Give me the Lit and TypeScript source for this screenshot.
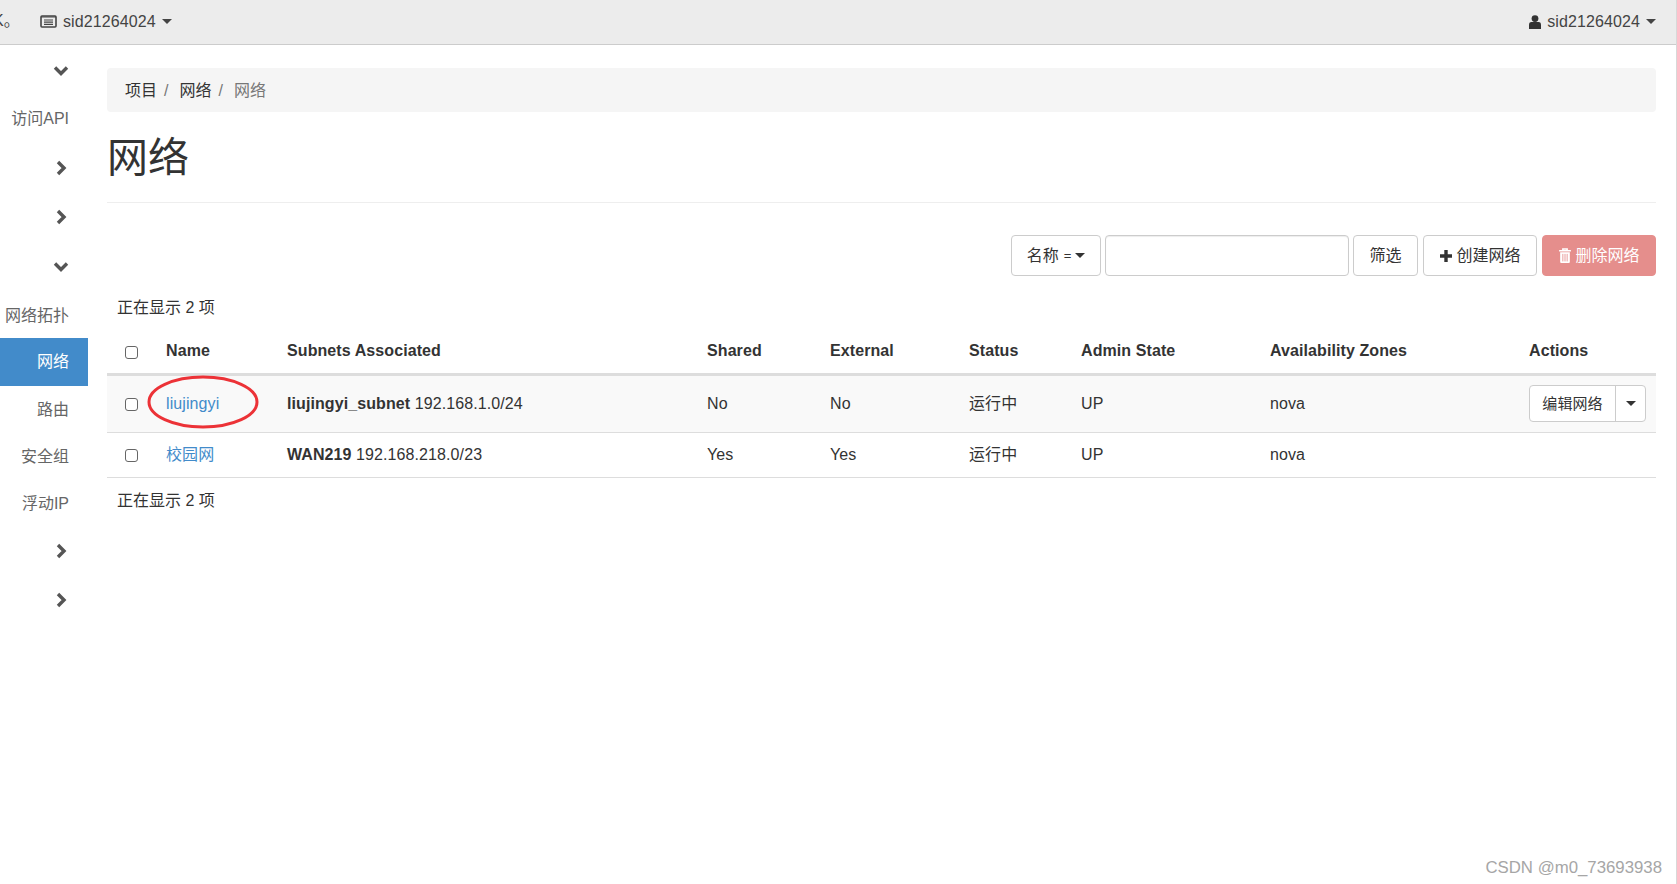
import { LitElement, css, html, svg } from "lit";
import { customElement } from "lit/decorators.js";

const chevronDown = svg`<path d="M2 5.5 8 11.5 14 5.5" fill="none" stroke="currentColor" stroke-width="3.4"/>`;
const chevronRight = svg`<path d="M5 2 11 8 5 14" fill="none" stroke="currentColor" stroke-width="3.4"/>`;

const columns = ["Name", "Subnets Associated", "Shared", "External", "Status", "Admin State", "Availability Zones", "Actions"];

@customElement("app-root")
export class AppRoot extends LitElement {
  static styles = css`
    :host {
      display: block;
      position: relative;
      height: 884px;
      overflow: hidden;
      background: #fff;
      color: #333;
      font-family: "Liberation Sans", "Noto Sans CJK SC", sans-serif;
      font-size: 16px;
      line-height: 22px;
    }
    * {
      box-sizing: border-box;
    }
    .navbar {
      display: flex;
      align-items: center;
      height: 45px;
      padding: 0 20px 1px 40px;
      margin-right: 1px;
      background: #ececec;
      border-bottom: 1px solid #ccc;
      color: #444;
      letter-spacing: 0.1px;
    }
    .logo-bit {
      position: absolute;
      left: -7px;
      top: 10px;
      font-size: 16px;
      color: #444;
    }
    .nav-item {
      display: flex;
      align-items: center;
    }
    .nav-item .icon {
      margin-right: 6px;
    }
    .spacer {
      flex: 1;
    }
    .caret {
      display: inline-block;
      width: 0;
      height: 0;
      margin-left: 6px;
      border-top: 5px solid currentColor;
      border-left: 5px solid transparent;
      border-right: 5px solid transparent;
    }
    .layout {
      display: flex;
      align-items: flex-start;
    }
    .sidebar {
      flex: none;
      width: 88px;
      color: #666;
    }
    .row {
      display: flex;
      align-items: center;
      justify-content: flex-end;
      padding-right: 19px;
    }
    .row.top {
      height: 49px;
      color: #555;
    }
    .row.top svg {
      display: block;
      width: 16px;
      height: 16px;
    }
    .group {
      margin: 2px 0 -1px;
    }
    .row.sub {
      height: 47px;
    }
    .row.sub.first {
      height: 46px;
      padding-top: 1px;
    }
    .row.sub.api {
      height: 49px;
    }
    .row.active {
      height: 48px;
      background: #428bca;
      color: #fff;
    }
    .content {
      flex: 1;
      min-width: 0;
      padding: 23px 21px 0 19px;
    }
    .breadcrumb {
      display: flex;
      align-items: center;
      height: 44px;
      padding: 2px 18px 0;
      background: #f5f5f5;
      border-radius: 4px;
    }
    .breadcrumb .sep {
      padding: 0 11px 0 7px;
      color: #777;
    }
    .breadcrumb .current {
      color: #777;
    }
    h1 {
      margin: 0;
      height: 91px;
      padding-top: 19px;
      border-bottom: 1px solid #eee;
      font-size: 41px;
      font-weight: 400;
      line-height: 54px;
    }
    .toolbar {
      display: flex;
      justify-content: flex-end;
      gap: 4px;
      margin-top: 32px;
    }
    .btn {
      display: flex;
      align-items: center;
      justify-content: center;
      height: 41px;
      padding: 0;
      background: #fff;
      border: 1px solid #ccc;
      border-radius: 4px;
      color: #333;
      font: inherit;
    }
    .btn svg {
      margin-right: 3px;
    }
    .btn.filter-name {
      width: 90px;
    }
    .btn.filter-name .eq {
      margin-left: 5px;
      font-size: 13px;
    }
    .btn.filter-name .caret {
      margin-left: 4px;
    }
    .filter-input {
      width: 244px;
      height: 41px;
      border: 1px solid #ccc;
      border-radius: 4px;
      box-shadow: inset 0 1px 1px rgba(0, 0, 0, 0.075);
    }
    .btn.filter {
      width: 65px;
    }
    .btn.create {
      width: 114px;
      margin-left: 1px;
    }
    .btn.delete {
      width: 114px;
      margin-left: 1px;
      background: #e58e8c;
      border-color: #e58e8c;
      color: #fff;
    }
    .count {
      height: 22px;
      padding-left: 10px;
    }
    .count.top {
      margin-top: 21px;
    }
    .count.bottom {
      margin-top: 12px;
    }
    table {
      width: 100%;
      margin-top: 10px;
      border-collapse: collapse;
      table-layout: fixed;
      letter-spacing: 0.09px;
    }
    th,
    td {
      padding: 0 0 0 8px;
      text-align: left;
      vertical-align: middle;
    }
    th {
      height: 45px;
      padding-top: 1px;
      border-bottom: 3px solid #ddd;
      font-weight: 700;
    }
    td {
      border-bottom: 1px solid #ddd;
    }
    tr.odd td {
      height: 58px;
      background: #f9f9f9;
    }
    tr.even td {
      height: 45px;
    }
    .check {
      display: block;
      width: 13px;
      height: 13px;
      margin: 2px 0 0 10px;
      border: 1.5px solid #666;
      border-radius: 3px;
      background: #fff;
    }
    .name-cell {
      position: relative;
    }
    a {
      color: #428bca;
      text-decoration: none;
    }
    .ring {
      position: absolute;
      left: -11px;
      top: -1px;
      width: 112px;
      height: 54px;
      pointer-events: none;
    }
    .actions {
      display: flex;
      width: 117px;
      height: 37px;
      background: #fff;
      border: 1px solid #ccc;
      border-radius: 4px;
      font-size: 15px;
    }
    .actions .main {
      display: flex;
      align-items: center;
      justify-content: center;
      width: 86px;
      border-right: 1px solid #ccc;
    }
    .actions .more {
      display: flex;
      flex: 1;
      align-items: center;
      justify-content: center;
    }
    .actions .caret {
      margin: 0;
    }
    .edge {
      position: absolute;
      top: 0;
      right: 0;
      bottom: 0;
      width: 1px;
      background: #d8d8d8;
    }
    .watermark {
      position: absolute;
      right: 15px;
      bottom: 5px;
      color: #a6a6a6;
      font-size: 16.8px;
    }
  `;

  private sideTop(icon: unknown) {
    return html`<div class="row top"><svg viewBox="0 0 16 16">${icon}</svg></div>`;
  }

  render() {
    return html`
      <div class="navbar">
        <span class="logo-bit">K。</span>
        <div class="nav-item">
          <svg class="icon" width="17" height="13" viewBox="0 0 17 13">
            <rect x="1" y="1" width="15" height="11" rx="1" fill="none" stroke="#444" stroke-width="1.6" />
            <path d="M1 2h15M4 5h9M4 7.2h9M4 9.4h9" stroke="#444" stroke-width="1.2" />
          </svg>
          sid21264024<span class="caret"></span>
        </div>
        <div class="spacer"></div>
        <div class="nav-item">
          <svg class="icon" width="12" height="14" viewBox="0 0 12 14">
            <circle cx="6" cy="3.6" r="3.4" fill="#333" />
            <path d="M0 14V9.5C0 7.8 1.2 7 2.4 7h7.2C10.8 7 12 7.8 12 9.5V14z" fill="#333" />
          </svg>
          sid21264024<span class="caret"></span>
        </div>
      </div>
      <div class="layout">
        <nav class="sidebar">
          ${this.sideTop(chevronDown)}
          <div class="row sub api">访问API</div>
          ${this.sideTop(chevronRight)} ${this.sideTop(chevronRight)} ${this.sideTop(chevronDown)}
          <div class="group">
            <div class="row sub first">网络拓扑</div>
            <div class="row active">网络</div>
            <div class="row sub">路由</div>
            <div class="row sub">安全组</div>
            <div class="row sub">浮动IP</div>
          </div>
          ${this.sideTop(chevronRight)} ${this.sideTop(chevronRight)}
        </nav>
        <main class="content">
          <div class="breadcrumb">
            <span>项目</span><span class="sep">/</span><span>网络</span><span class="sep">/</span>
            <span class="current">网络</span>
          </div>
          <h1>网络</h1>
          <div class="toolbar">
            <button class="btn filter-name">名称<span class="eq">=</span><span class="caret"></span></button>
            <input class="filter-input" />
            <button class="btn filter">筛选</button>
            <button class="btn create">
              <svg width="14" height="14" viewBox="0 0 14 14"><path d="M7 1v12M1 7h12" stroke="#333" stroke-width="3.4" /></svg>
              创建网络
            </button>
            <button class="btn delete">
              <svg width="14" height="15" viewBox="0 0 13 14">
                <path d="M1 2.5h11M4.5 2.5V1h4v1.5" fill="none" stroke="#fff" stroke-width="1.4" />
                <path d="M2 4h9v9a1 1 0 0 1-1 1H3a1 1 0 0 1-1-1z" fill="#fff" />
                <path d="M4.5 5.5v7M6.5 5.5v7M8.5 5.5v7" stroke="#e58e8c" stroke-width="0.8" />
              </svg>
              删除网络
            </button>
          </div>
          <div class="count top">正在显示 2 项</div>
          <table>
            <colgroup>
              <col style="width:51px" />
              <col style="width:121px" />
              <col style="width:420px" />
              <col style="width:123px" />
              <col style="width:139px" />
              <col style="width:112px" />
              <col style="width:189px" />
              <col style="width:259px" />
              <col style="width:135px" />
            </colgroup>
            <thead>
              <tr>
                <th><span class="check"></span></th>
                ${columns.map((c) => html`<th>${c}</th>`)}
              </tr>
            </thead>
            <tbody>
              <tr class="odd">
                <td><span class="check"></span></td>
                <td class="name-cell">
                  <a href="#">liujingyi</a>
                  <svg class="ring" viewBox="0 0 112 54">
                    <ellipse cx="56" cy="27" rx="54" ry="25" fill="none" stroke="#ec3237" stroke-width="3" />
                  </svg>
                </td>
                <td><b>liujingyi_subnet</b> 192.168.1.0/24</td>
                <td>No</td>
                <td>No</td>
                <td>运行中</td>
                <td>UP</td>
                <td>nova</td>
                <td>
                  <div class="actions">
                    <span class="main">编辑网络</span>
                    <span class="more"><span class="caret"></span></span>
                  </div>
                </td>
              </tr>
              <tr class="even">
                <td><span class="check"></span></td>
                <td><a href="#">校园网</a></td>
                <td><b>WAN219</b> 192.168.218.0/23</td>
                <td>Yes</td>
                <td>Yes</td>
                <td>运行中</td>
                <td>UP</td>
                <td>nova</td>
                <td></td>
              </tr>
            </tbody>
          </table>
          <div class="count bottom">正在显示 2 项</div>
        </main>
      </div>
      <div class="edge"></div>
      <div class="watermark">CSDN @m0_73693938</div>
    `;
  }
}
